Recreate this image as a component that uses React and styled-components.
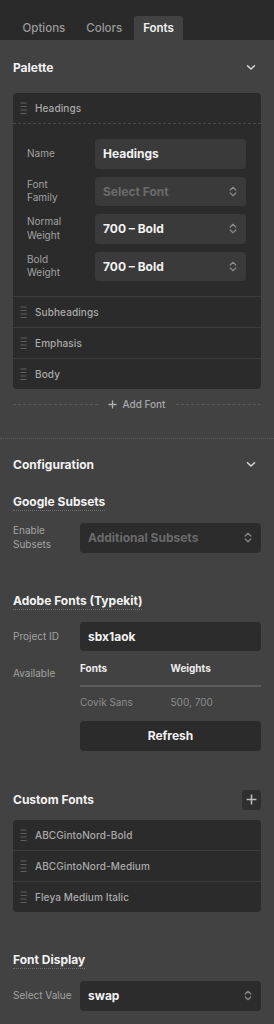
import React from 'react';
import styled, { createGlobalStyle } from 'styled-components';

const GlobalStyle = createGlobalStyle`
  html, body {
    margin: 0;
    padding: 0;
    background: #424242;
  }
  body {
    font-family: Inter, "Noto Sans", "Liberation Sans", sans-serif;
    -webkit-font-smoothing: antialiased;
  }
  * {
    box-sizing: border-box;
  }
`;

const Panel = styled.div`
  width: 274px;
  min-height: 1024px;
  background: #424242;
  color: #f0f0f0;
`;

const TabBar = styled.div`
  display: flex;
  align-items: flex-end;
  gap: 2px;
  height: 40px;
  padding-left: 13px;
  background: #2a2a2a;
`;

const Tab = styled.div`
  height: 24px;
  padding: 0 9.5px;
  display: flex;
  align-items: center;
  font-size: 11.5px;
  font-weight: ${p => (p.$active ? 600 : 500)};
  color: ${p => (p.$active ? '#f2f2f2' : '#9a9a9a')};
  background: ${p => (p.$active ? '#424242' : 'transparent')};
  border-radius: 3px 3px 0 0;
`;

const Section = styled.div`
  padding: ${p => p.$top}px 13px 0;
`;

const SectionHeader = styled.div`
  display: flex;
  align-items: center;
  justify-content: space-between;
  height: ${p => p.$height || 22}px;
  margin-top: ${p => p.$mt || 0}px;
`;

const Title = styled.div`
  font-size: 12px;
  font-weight: 700;
  color: #f2f2f2;
`;

const Card = styled.div`
  margin-top: ${p => p.$mt}px;
  background: #2b2b2b;
  border-radius: 4px;
  overflow: hidden;
`;

const DragRow = styled.div`
  display: flex;
  align-items: center;
  gap: 8px;
  height: 30px;
  padding-left: 7px;
  font-size: 10px;
  font-weight: 500;
  letter-spacing: 0.1px;
  color: #aaaaaa;
  border-top: ${p => (p.$first ? 'none' : '1px solid #3c3c3c')};
  border-bottom: ${p => (p.$dashed ? '1px dashed #4a4a4a' : 'none')};
  box-sizing: content-box;
`;

const Fields = styled.div`
  display: flex;
  flex-direction: column;
  gap: 8px;
  padding: 15px 15px 15px 14px;
`;

const FieldRow = styled.div`
  display: flex;
  align-items: ${p => (p.$top ? 'flex-start' : 'center')};
  margin-top: ${p => p.$mt || 0}px;
`;

const Label = styled.div`
  flex: 0 0 ${p => p.$w || 67}px;
  font-size: 10px;
  line-height: 13.4px;
  color: #a2a2a2;
  padding-top: ${p => p.$pt || 0}px;
`;

const Control = styled.div`
  flex: 1;
  display: flex;
  align-items: center;
  justify-content: space-between;
  height: 29.5px;
  padding: 0 9px 0 8px;
  border-radius: 4px;
  background: ${p => (p.$inset ? '#3a3a3a' : '#2c2c2c')};
  font-size: 12px;
  font-weight: 700;
  color: ${p => (p.$placeholder ? '#6b6b6b' : '#f2f2f2')};
`;

const AddFontRow = styled.div`
  display: flex;
  align-items: center;
  gap: 10px;
  height: 30px;
  font-size: 10px;
  font-weight: 500;
  color: #a8a8a8;

  &::before,
  &::after {
    content: '';
    flex: 1;
    border-top: 1px dashed #5a5a5a;
  }
`;

const AddFontLabel = styled.span`
  display: flex;
  align-items: center;
  gap: 5px;
`;

const Divider = styled.div`
  margin-top: 19px;
  border-top: 1px dotted #5c5c5c;
`;

const SubHeading = styled.div`
  display: inline-block;
  margin-top: ${p => p.$mt}px;
  font-size: 12px;
  font-weight: 700;
  line-height: 17px;
  color: #f2f2f2;
  border-bottom: 1px dotted #707070;
`;

const Table = styled.div`
  flex: 1;
`;

const TableRow = styled.div`
  display: grid;
  grid-template-columns: 1fr 1fr;
  padding: ${p => (p.$head ? '10px 0 10px' : '8px 0 12px')};
  border-bottom: ${p => (p.$head ? '2px solid #5c5c5c' : 'none')};
  font-size: 10px;
  line-height: 14px;
  font-weight: ${p => (p.$head ? 700 : 400)};
  color: ${p => (p.$head ? '#ececec' : '#8c8c8c')};
`;

const Button = styled.div`
  height: 29.5px;
  display: flex;
  align-items: center;
  justify-content: center;
  border-radius: 4px;
  background: #2b2b2b;
  font-size: 12px;
  font-weight: 700;
  color: #f2f2f2;
`;

const IconButton = styled.div`
  width: 19px;
  height: 19.5px;
  display: flex;
  align-items: center;
  justify-content: center;
  border-radius: 3px;
  background: #2f2f2f;
`;

const Handle = () => (
  <svg width="7" height="13" viewBox="0 0 7 13">
    <g stroke="#606060" strokeWidth="1">
      <line x1="0.5" y1="1" x2="6.5" y2="1" />
      <line x1="0.5" y1="4.5" x2="6.5" y2="4.5" />
      <line x1="0.5" y1="8" x2="6.5" y2="8" />
      <line x1="0.5" y1="11.5" x2="6.5" y2="11.5" />
    </g>
  </svg>
);

const ChevronDown = () => (
  <svg width="10" height="7" viewBox="0 0 10 7" style={{ marginRight: 5 }}>
    <path d="M1.5 1.8 L5 5 L8.5 1.8" fill="none" stroke="#dcdcdc" strokeWidth="1.5" strokeLinecap="round" strokeLinejoin="round" />
  </svg>
);

const UpDown = () => (
  <svg width="8" height="11" viewBox="0 0 8 11">
    <path
      d="M1.2 4 L4 1.3 L6.8 4 M1.2 7 L4 9.7 L6.8 7"
      fill="none"
      stroke="#8a8a8a"
      strokeWidth="1.2"
      strokeLinecap="round"
      strokeLinejoin="round"
    />
  </svg>
);

const Plus = ({ size = 9, color = '#b0b0b0' }) => (
  <svg width={size} height={size} viewBox="0 0 10 10">
    <path d="M5 0.5 V9.5 M0.5 5 H9.5" stroke={color} strokeWidth="1.4" />
  </svg>
);

const paletteRows = ['Subheadings', 'Emphasis', 'Body'];
const customFonts = ['ABCGintoNord-Bold', 'ABCGintoNord-Medium', 'Fleya Medium Italic'];

const Select = ({ value, placeholder, inset }) => (
  <Control $inset={inset} $placeholder={!value}>
    <span>{value || placeholder}</span>
    <UpDown />
  </Control>
);

export default function App() {
  return (
    <Panel>
      <GlobalStyle />
      <TabBar>
        <Tab>Options</Tab>
        <Tab>Colors</Tab>
        <Tab $active>Fonts</Tab>
      </TabBar>

      <Section $top={16}>
        <SectionHeader>
          <Title>Palette</Title>
          <ChevronDown />
        </SectionHeader>

        <Card $mt={15}>
          <DragRow $first $dashed>
            <Handle />
            Headings
          </DragRow>
          <Fields>
            <FieldRow>
              <Label $w={68}>Name</Label>
              <Control $inset>Headings</Control>
            </FieldRow>
            <FieldRow>
              <Label $w={68}>
                Font
                <br />
                Family
              </Label>
              <Select inset placeholder="Select Font" />
            </FieldRow>
            <FieldRow>
              <Label $w={68}>
                Normal
                <br />
                Weight
              </Label>
              <Select inset value="700 – Bold" />
            </FieldRow>
            <FieldRow>
              <Label $w={68}>
                Bold
                <br />
                Weight
              </Label>
              <Select inset value="700 – Bold" />
            </FieldRow>
          </Fields>
          {paletteRows.map(name => (
            <DragRow key={name}>
              <Handle />
              {name}
            </DragRow>
          ))}
        </Card>

        <AddFontRow>
          <AddFontLabel>
            <Plus />
            Add Font
          </AddFontLabel>
        </AddFontRow>
      </Section>

      <Divider />

      <Section $top={14}>
        <SectionHeader>
          <Title>Configuration</Title>
          <ChevronDown />
        </SectionHeader>

        <SubHeading $mt={18}>Google Subsets</SubHeading>
        <FieldRow $mt={12}>
          <Label>
            Enable
            <br />
            Subsets
          </Label>
          <Select placeholder="Additional Subsets" />
        </FieldRow>

        <SubHeading $mt={39}>Adobe Fonts (Typekit)</SubHeading>
        <FieldRow $mt={12}>
          <Label>Project ID</Label>
          <Control>sbx1aok</Control>
        </FieldRow>
        <FieldRow $top>
          <Label $pt={16}>Available</Label>
          <Table>
            <TableRow $head>
              <span>Fonts</span>
              <span>Weights</span>
            </TableRow>
            <TableRow>
              <span>Covik Sans</span>
              <span>500, 700</span>
            </TableRow>
            <Button>Refresh</Button>
          </Table>
        </FieldRow>

        <SectionHeader $height={19.5} $mt={39.5}>
          <Title>Custom Fonts</Title>
          <IconButton>
            <Plus size={11} color="#bdbdbd" />
          </IconButton>
        </SectionHeader>
        <Card $mt={10.5}>
          {customFonts.map((name, i) => (
            <DragRow key={name} $first={i === 0}>
              <Handle />
              {name}
            </DragRow>
          ))}
        </Card>

        <SubHeading $mt={39}>Font Display</SubHeading>
        <FieldRow $mt={12}>
          <Label>Select Value</Label>
          <Select value="swap" />
        </FieldRow>
      </Section>
    </Panel>
  );
}
